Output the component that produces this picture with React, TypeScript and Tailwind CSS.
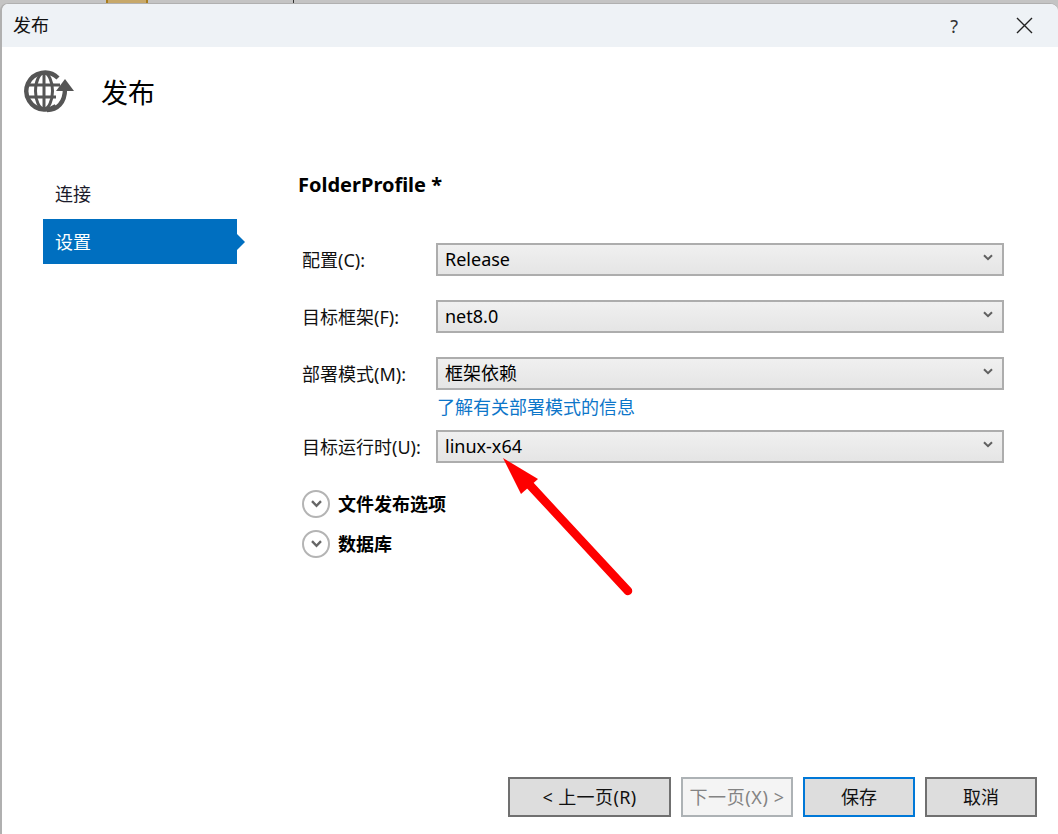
import React from "react";

const font = { fontFamily: '"Noto Sans", "Noto Sans CJK SC", sans-serif' };

function Combo({ value }: { value: string }) {
  return (
    <div className="flex h-[33px] flex-1 items-center justify-between border-2 border-[#adadad] bg-gradient-to-b from-[#f0f0f0] to-[#e5e5e5] pl-[7px] pr-[9px]">
      <span className="mb-[1px] text-[18px] leading-none text-black">{value}</span>
      <svg width="10" height="7" viewBox="0 0 10 7" className="mb-[4px]">
        <path d="M1 1.2 L5 5.2 L9 1.2" fill="none" stroke="#606060" strokeWidth="2" />
      </svg>
    </div>
  );
}

function Row({ label, value, className }: { label: string; value: string; className: string }) {
  return (
    <div className={`flex items-center ${className}`}>
      <span className="w-[138px] pl-[4px] text-[18px] leading-none text-[#111]">{label}</span>
      <Combo value={value} />
    </div>
  );
}

function Expander({ label, className }: { label: string; className: string }) {
  return (
    <div className={`flex h-[28px] items-center gap-[8px] ${className}`}>
      <div className="ml-[4px] flex h-[28px] w-[28px] items-center justify-center rounded-full border-2 border-[#b4b4b4] bg-white">
        <svg width="11" height="8" viewBox="0 0 11 8">
          <path d="M1 1.2 L5.5 5.8 L10 1.2" fill="none" stroke="#666" strokeWidth="2.4" />
        </svg>
      </div>
      <span className="text-[18px] font-bold leading-none text-black">{label}</span>
    </div>
  );
}

function Btn({ label, className }: { label: string; className: string }) {
  return (
    <div className={`flex h-[40px] items-center justify-center border-2 text-[18px] leading-none ${className}`}>
      {label}
    </div>
  );
}

export default function App() {
  return (
    <div className="relative h-[834px] w-[1058px] overflow-hidden bg-[#c4c4c4]" style={font}>
      {/* window behind */}
      <div className="absolute left-[106px] top-0 h-[3px] w-[42px] border-x-2 border-[#a97c1b] bg-[#c7a86a]" />
      <div className="absolute left-[293px] top-0 h-[3px] w-[1px] bg-[#333]" />

      <div className="absolute inset-x-0 top-[3px] bottom-0 flex flex-col overflow-hidden rounded-t-[8px] border-l-2 border-t border-[#b0b0b0] bg-white">
        {/* title bar */}
        <div className="flex h-[43px] shrink-0 items-center justify-between bg-[#eef2f6]">
          <span className="pl-[11px] pb-[2px] text-[18px] leading-none text-[#111]">发布</span>
          <div className="flex items-center">
            <span className="mr-[58px] text-[18px] leading-none text-[#333]">?</span>
            <svg width="17" height="17" viewBox="0 0 17 17" className="mr-[25px]">
              <path d="M1 1 L16 16 M16 1 L1 16" stroke="#222" strokeWidth="1.4" fill="none" />
            </svg>
          </div>
        </div>

        {/* header */}
        <div className="flex h-[92px] shrink-0 items-center">
          <svg width="52" height="46" viewBox="0 0 52 46" className="ml-[21px] mb-[2px] blur-[0.4px]">
            <g fill="none" stroke="#555555">
              <path d="M33 37 A18.5 18.5 0 0 1 21 40.5 A18.5 18.5 0 1 1 35 9" strokeWidth="4.4" />
              <ellipse cx="21" cy="22" rx="8.5" ry="18" strokeWidth="3" />
              <path d="M21 4 V40 M4 16 H37 M4 28 H33" strokeWidth="3" />
              <path d="M24 41 C34 41 42 34 42 20" strokeWidth="4.4" />
            </g>
            <path d="M33 22 L42 10 L51 22 Z" fill="#555555" />
          </svg>
          <span className="ml-[26px] mb-[2px] text-[27px] leading-none text-black">发布</span>
        </div>

        {/* body */}
        <div className="flex flex-1">
          <div className="w-[243px] shrink-0 pl-[41px] pt-[31px]">
            <div className="flex h-[49px] items-center pl-[12px] pb-[1px] text-[18px] leading-none text-[#1a1a2a]">连接</div>
            <div className="relative flex h-[45px] w-[194px] items-center bg-[#006fc0] pl-[12px] text-[18px] leading-none text-white">
              设置
              <div className="absolute left-full top-1/2 h-0 w-0 -translate-y-1/2 border-y-[8px] border-l-[8px] border-y-transparent border-l-[#006fc0]" />
            </div>
          </div>

          <div className="flex-1 pl-[53px] pr-[54px]">
            <div className="pt-[34px] text-[20px] font-bold leading-[24px] text-black">FolderProfile *</div>
            <Row label="配置(C):" value="Release" className="mt-[46px]" />
            <Row label="目标框架(F):" value="net8.0" className="mt-[24px]" />
            <Row label="部署模式(M):" value="框架依赖" className="mt-[24px]" />
            <div className="ml-[139px] mt-[4px] h-[36px] text-[18px] leading-[26px] text-[#0d76c9]">了解有关部署模式的信息</div>
            <Row label="目标运行时(U):" value="linux-x64" className="" />
            <Expander label="文件发布选项" className="mt-[27px]" />
            <Expander label="数据库" className="mt-[12px]" />
          </div>
        </div>

        {/* footer */}
        <div className="flex h-[57px] shrink-0 justify-end gap-[10px] pr-[21px]">
          <Btn label="< 上一页(R)" className="w-[163px] border-[#707070] bg-[#dddddd] tracking-[0.4px] text-[#111]" />
          <Btn label="下一页(X) >" className="w-[112px] border-[#adb2b5] bg-[#f4f4f4] tracking-[0.6px] text-[#838383]" />
          <Btn label="保存" className="w-[112px] border-[#0078d7] bg-[#dddddd] text-[#111]" />
          <Btn label="取消" className="w-[112px] border-[#707070] bg-[#dddddd] text-[#111]" />
        </div>
      </div>

      {/* annotation arrow */}
      <svg className="absolute left-[490px] top-[450px]" width="150" height="150" viewBox="0 0 150 150">
        <path d="M138 141 L37 32" stroke="#fe0000" strokeWidth="8.5" strokeLinecap="round" fill="none" />
        <path d="M13 8 L48 29 L31 44 Z" fill="#fe0000" />
      </svg>
    </div>
  );
}
